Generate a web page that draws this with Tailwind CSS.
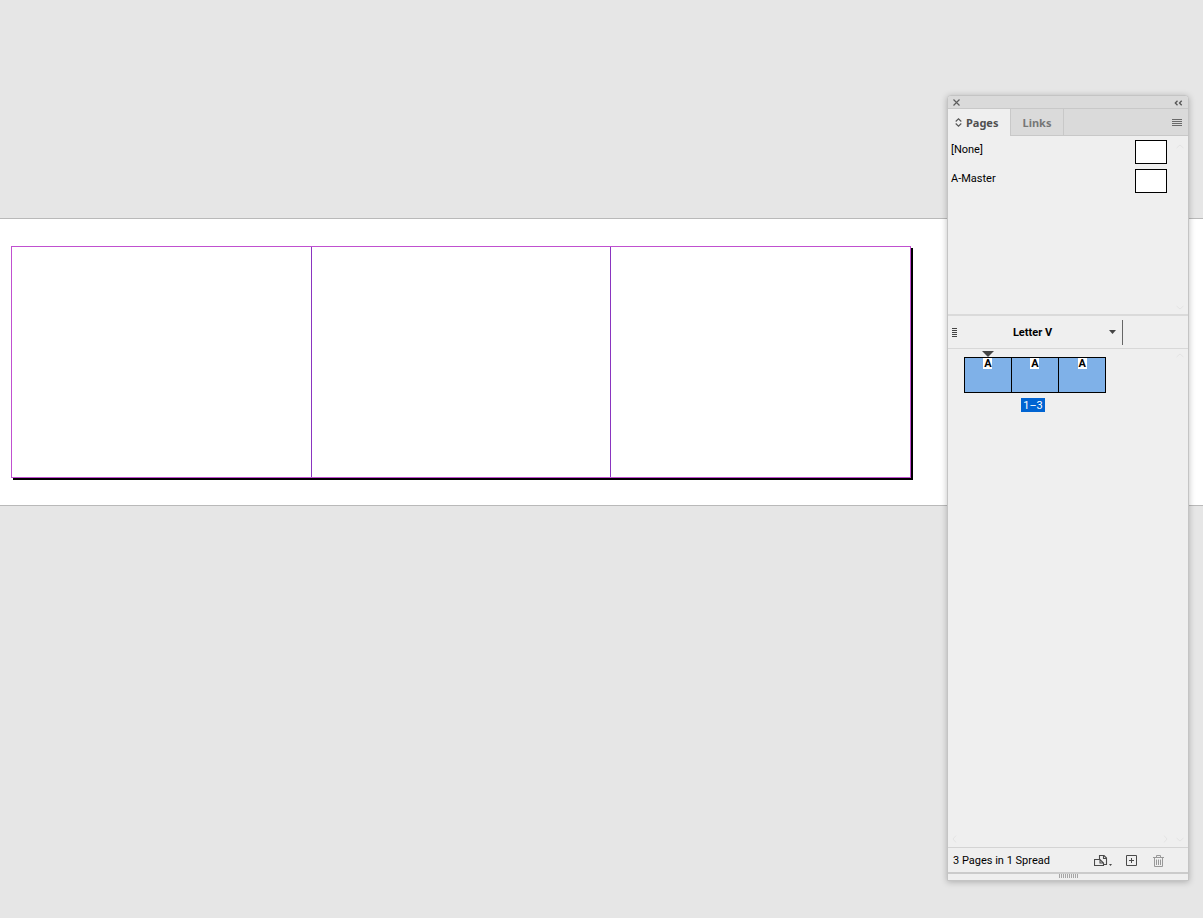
<!DOCTYPE html>
<html lang="en">

<head>
    <meta charset="UTF-8">
    <meta name="viewport" content="width=device-width, initial-scale=1.0">
    <title>Pages</title>
    <script src="https://cdn.jsdelivr.net/npm/@tailwindcss/browser@4"></script>
</head>

<body class="relative h-screen overflow-hidden bg-[#e6e6e6] font-['Roboto',sans-serif] text-[11px] leading-4 text-black">

    <!-- pasteboard -->
    <main class="pt-[218px]">
        <div class="border-y border-[#b9b9b9] bg-white py-[27px] pl-[11px]">
            <div class="grid h-[232px] w-[900px] grid-cols-3 border border-[#c050d0] bg-white shadow-[2px_2px_0_#000]">
                <div></div>
                <div class="border-x border-[#8a35c0]"></div>
                <div></div>
            </div>
        </div>
    </main>

    <!-- floating panel -->
    <aside class="absolute top-[95px] right-[14px] bottom-[37px] flex w-[242px] flex-col rounded-t-[4px] border border-[#c4c4c4] bg-[#efefef] shadow-[0_1px_6px_rgba(0,0,0,0.25)]">
        <div class="flex h-[13px] shrink-0 items-center justify-between rounded-t-[3px] border-b border-[#c8c8c8] bg-[#dadada] px-[5px] pt-px">
            <button aria-label="Close">
                <svg class="h-[7px] w-[7px]" viewBox="0 0 7 7" stroke="#5c5c5c" stroke-width="1.2"><path d="M0.5 0.5L6.5 6.5M6.5 0.5L0.5 6.5" /></svg>
            </button>
            <button aria-label="Collapse">
                <svg class="h-[6px] w-[9px]" viewBox="0 0 9 6" fill="none" stroke="#555" stroke-width="1.3"><path d="M3.5 0.7L1.3 3L3.5 5.3M7.7 0.7L5.5 3L7.7 5.3" /></svg>
            </button>
        </div>

        <!-- tabs -->
        <div class="flex h-[27px] shrink-0 bg-[#dadada] font-['Noto_Sans',sans-serif] font-bold">
            <button class="flex w-[62px] items-center gap-1 bg-[#efefef] pl-[7px] text-[#505050]">
                <svg class="h-[9px] w-[7px]" viewBox="0 0 7 9" fill="none" stroke="#555" stroke-width="1.1"><path d="M0.7 3.5L3.5 0.8L6.3 3.5M0.7 5.5L3.5 8.2L6.3 5.5" /></svg>
                Pages
            </button>
            <button class="w-[54px] border-x border-b border-[#c8c8c8] pt-px text-[#777]">Links</button>
            <div class="flex flex-1 items-center justify-end border-b border-[#c8c8c8] pr-[6px]">
                <button aria-label="Panel menu">
                    <svg class="h-[7px] w-[10px]" viewBox="0 0 10 7" fill="#6a6a6a"><path d="M0 0h10v1H0zM0 2h10v1H0zM0 4h10v1H0zM0 6h10v1H0z" /></svg>
                </button>
            </div>
        </div>

        <!-- masters -->
        <div class="flex h-[180px] shrink-0 border-b-2 border-[#dadada] pt-1 pl-[3px]">
            <ul class="flex flex-1 flex-col gap-[5px]">
                <li class="flex justify-between">
                    <span class="pt-[2px]">[None]</span>
                    <span class="h-6 w-8 border border-black bg-white"></span>
                </li>
                <li class="flex justify-between">
                    <span class="pt-[2px]">A-Master</span>
                    <span class="h-6 w-8 border border-black bg-white"></span>
                </li>
            </ul>
            <div class="flex w-[21px] flex-col items-end justify-between py-1 pr-1">
                <svg class="h-[5px] w-2" viewBox="0 0 8 5" fill="none" stroke="#e4e4e4"><path d="M0.5 4L4 1L7.5 4" /></svg>
                <svg class="h-[5px] w-2" viewBox="0 0 8 5" fill="none" stroke="#e4e4e4"><path d="M0.5 1L4 4L7.5 1" /></svg>
            </div>
        </div>

        <!-- page size -->
        <div class="flex h-[33px] shrink-0 items-center border-b border-[#d8d8d8] pl-1">
            <svg class="h-[9px] w-[5px]" viewBox="0 0 5 9" fill="#444"><path d="M0 0h5v1H0zM0 2h5v1H0zM0 4h5v1H0zM0 6h5v1H0zM0 8h5v1H0z" /></svg>
            <div class="relative ml-2 flex h-[25px] w-[158px] items-center border-r border-[#666]">
                <select aria-label="Page size" class="h-full w-full appearance-none pt-[2px] pr-[22px] text-center font-bold">
                    <option>Letter V</option>
                </select>
                <svg class="pointer-events-none absolute right-[6px] h-1 w-[7px]" viewBox="0 0 7 4" fill="#444"><path d="M0 0h7L3.5 4z" /></svg>
            </div>
        </div>

        <!-- spreads -->
        <section class="flex flex-1 flex-col justify-between pt-[2px] pl-4">
            <div class="flex justify-between pr-1">
                <div class="w-[142px]">
                    <svg class="ml-[18px] h-[6px] w-3" viewBox="0 0 12 6" fill="#444"><path d="M0 0h12L6 6z" /></svg>
                    <div class="grid h-9 grid-cols-3 border border-black bg-[#7fb1e8] text-center text-[11px] leading-[11px] font-bold">
                        <div class="border-r border-black"><span class="inline-block w-[9px] bg-white align-top">A</span></div>
                        <div><span class="inline-block w-[9px] bg-white align-top">A</span></div>
                        <div class="border-l border-black"><span class="inline-block w-[9px] bg-white align-top">A</span></div>
                    </div>
                    <div class="mt-[5px] ml-[57px] flex h-[14px] w-6 items-center justify-center bg-[#0064d2] pt-px text-white">1–3</div>
                </div>
                <svg class="mt-[2px] h-[5px] w-2" viewBox="0 0 8 5" fill="none" stroke="#e4e4e4"><path d="M0.5 4L4 1L7.5 4" /></svg>
            </div>
            <div class="-ml-3 flex items-center pr-1 pb-1">
                <svg class="h-2 w-[5px]" viewBox="0 0 5 8" fill="none" stroke="#e4e4e4"><path d="M4 0.5L1 4L4 7.5" /></svg>
                <svg class="ml-auto h-2 w-[5px]" viewBox="0 0 5 8" fill="none" stroke="#e4e4e4"><path d="M1 0.5L4 4L1 7.5" /></svg>
                <svg class="ml-2 h-[5px] w-2" viewBox="0 0 8 5" fill="none" stroke="#e4e4e4"><path d="M0.5 1L4 4L7.5 1" /></svg>
            </div>
        </section>

        <!-- footer -->
        <div class="flex h-[27px] shrink-0 items-center justify-between border-t border-b-2 border-t-[#d4d4d4] border-b-[#cbcbcb] pr-6 pl-[5px]">
            <span class="pt-[2px]">3 Pages in 1 Spread</span>
            <div class="flex items-center pt-px">
                <button aria-label="Edit page size">
                    <svg class="h-3 w-[18px]" viewBox="0 0 18 12" fill="none" stroke="#4a4a4a" stroke-width="1.1"><path d="M5.5 4V0.5H10L12.5 3V9.5H9.5M9.5 0.5V3.5H12.5M0.5 4.5H6L9.5 8V10.5H0.5ZM6 4.5V8H9.5" /><path d="M15 9h3L16.5 11z" fill="#4a4a4a" stroke="none" /></svg>
                </button>
                <button class="ml-[14px]" aria-label="New page">
                    <svg class="h-[11px] w-[11px]" viewBox="0 0 11 11" fill="none" stroke="#4a4a4a"><path d="M0.5 0.5H10.5V10.5H0.5ZM5.5 3V8M3 5.5H8" /></svg>
                </button>
                <button class="ml-4" aria-label="Delete page">
                    <svg class="h-3 w-[11px]" viewBox="0 0 11 12" fill="none" stroke="#999"><path d="M0 2.5H11M3.5 2V0.5H7.5V2M1.5 3V11.5H9.5V3M3.5 4.5V10M5.5 4.5V10M7.5 4.5V10" /></svg>
                </button>
            </div>
        </div>
        <div class="flex h-[6px] shrink-0 justify-center">
            <svg class="h-1 w-[19px]" viewBox="0 0 19 4" fill="#a5a5a5"><path d="M0 0h1v4H0zM2 0h1v4H2zM4 0h1v4H4zM6 0h1v4H6zM8 0h1v4H8zM10 0h1v4H10zM12 0h1v4H12zM14 0h1v4H14zM16 0h1v4H16zM18 0h1v4H18z" /></svg>
        </div>
    </aside>

</body>

</html>
